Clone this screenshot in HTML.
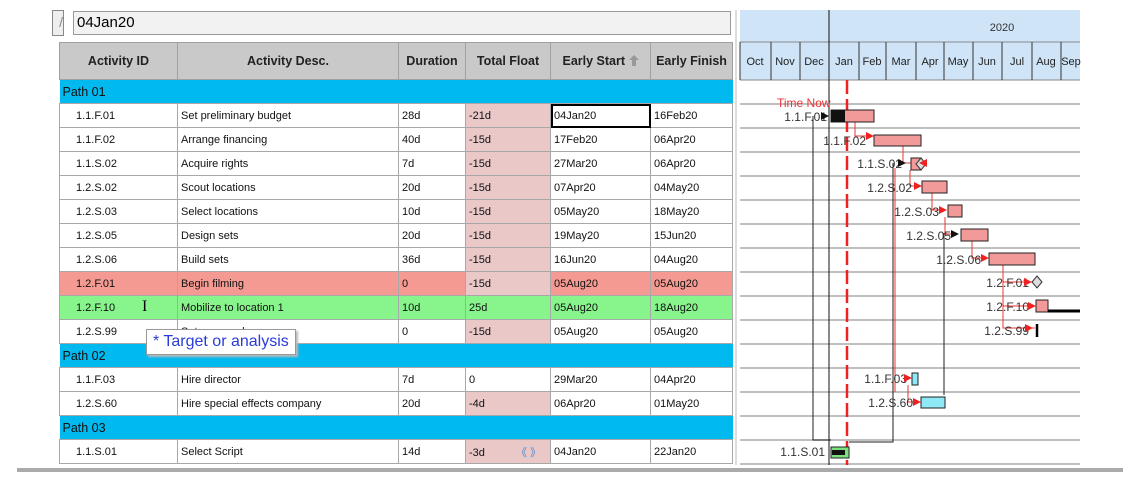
<!DOCTYPE html>
<html><head><meta charset="utf-8"><style>
body{margin:0;width:1147px;height:497px;background:#fff;position:relative;overflow:hidden;font-family:"Liberation Sans",sans-serif;}
.a{position:absolute;}
table{position:absolute;left:59px;top:42px;border-collapse:collapse;table-layout:fixed;font-size:11px;}
td{border:1px solid #a8a8a8;height:23px;padding:0 0 0 3px;white-space:nowrap;overflow:hidden;color:#111;}
th{background:#c9c9c9;border:1px solid #a0a0a0;height:36px;font-size:12.5px;font-weight:bold;color:#222;padding:0;white-space:nowrap;}
tr.p td{background:#00b9ef;font-size:12.5px;border-left:none;border-right:none;}
td.id{padding-left:16px;}
td.f{background:#eac8c8;}
tr.r td{background:#f59a92;} tr.r td.f{background:#eac8c8;}
tr.g td{background:#88f48c;}
</style></head><body>
<div class="a" style="left:52px;top:10px;width:10px;height:24px;border:1px solid #888;background:#eee;color:#888;font-size:14px;line-height:22px;text-align:right;overflow:hidden">/</div>
<div class="a" style="left:73px;top:11px;width:653px;height:22px;border:1px solid #999;background:#f2f2f2;font-size:15px;line-height:22px;padding-left:3px">04Jan20</div>
<table>
<colgroup><col style="width:118px"><col style="width:221px"><col style="width:67px"><col style="width:85px"><col style="width:100px"><col style="width:82px"></colgroup>
<tr><th>Activity ID</th><th>Activity Desc.</th><th>Duration</th><th>Total Float</th><th>Early Start <svg width="10" height="11" style="vertical-align:-1px"><path d="M5,0 L10,5 L7,5 L7,11 L3,11 L3,5 L0,5z" fill="#999"/></svg></th><th>Early Finish</th></tr>
<tr class="p"><td colspan="6">Path 01</td></tr>
<tr><td class="id">1.1.F.01</td><td>Set preliminary budget</td><td>28d</td><td class="f">-21d</td><td style="outline:2px solid #000;outline-offset:-2px">04Jan20</td><td>16Feb20</td></tr>
<tr><td class="id">1.1.F.02</td><td>Arrange financing</td><td>40d</td><td class="f">-15d</td><td>17Feb20</td><td>06Apr20</td></tr>
<tr><td class="id">1.1.S.02</td><td>Acquire rights</td><td>7d</td><td class="f">-15d</td><td>27Mar20</td><td>06Apr20</td></tr>
<tr><td class="id">1.2.S.02</td><td>Scout locations</td><td>20d</td><td class="f">-15d</td><td>07Apr20</td><td>04May20</td></tr>
<tr><td class="id">1.2.S.03</td><td>Select locations</td><td>10d</td><td class="f">-15d</td><td>05May20</td><td>18May20</td></tr>
<tr><td class="id">1.2.S.05</td><td>Design sets</td><td>20d</td><td class="f">-15d</td><td>19May20</td><td>15Jun20</td></tr>
<tr><td class="id">1.2.S.06</td><td>Build sets</td><td>36d</td><td class="f">-15d</td><td>16Jun20</td><td>04Aug20</td></tr>
<tr class="r"><td class="id">1.2.F.01</td><td>Begin filming</td><td>0</td><td class="f">-15d</td><td>05Aug20</td><td>05Aug20</td></tr>
<tr class="g"><td class="id">1.2.F.10</td><td>Mobilize to location 1</td><td>10d</td><td>25d</td><td>05Aug20</td><td>18Aug20</td></tr>
<tr><td class="id">1.2.S.99</td><td>Set prepared</td><td>0</td><td class="f">-15d</td><td>05Aug20</td><td>05Aug20</td></tr>
<tr class="p"><td colspan="6">Path 02</td></tr>
<tr><td class="id">1.1.F.03</td><td>Hire director</td><td>7d</td><td>0</td><td>29Mar20</td><td>04Apr20</td></tr>
<tr><td class="id">1.2.S.60</td><td>Hire special effects company</td><td>20d</td><td class="f">-4d</td><td>06Apr20</td><td>01May20</td></tr>
<tr class="p"><td colspan="6">Path 03</td></tr>
<tr><td class="id">1.1.S.01</td><td>Select Script</td><td>14d</td><td class="f">-3d <span style="color:#4a8ad0;margin-left:28px">《 》</span></td><td>04Jan20</td><td>22Jan20</td></tr>
</table>
<div class="a" style="left:142px;top:298px;font-size:16px;font-family:'Liberation Serif',serif">I</div>
<div class="a" style="left:146px;top:329px;padding:3px 6px;border:1px solid #999;background:#fff;color:#2a3cd8;font-size:16px;box-shadow:2px 2px 2px #bbb">* Target or analysis</div>
<div class="a" style="left:17px;top:468px;width:1106px;height:4px;background:#aaa"></div>
<svg class="a" style="left:735px;top:0" width="412" height="468" font-family="Liberation Sans,sans-serif">
<line x1="1" y1="10" x2="1" y2="465" stroke="#bbb"/>
<rect x="5" y="10" width="340" height="70" fill="#cfe4f7"/>
<text x="267" y="31" font-size="11" fill="#333" text-anchor="middle">2020</text>
<line x1="5" y1="42" x2="345" y2="42" stroke="#888"/>
<line x1="5" y1="80" x2="345" y2="80" stroke="#888"/>
<g stroke="#333"><line x1="5" y1="42" x2="5" y2="80"/><line x1="36" y1="42" x2="36" y2="80"/><line x1="65" y1="42" x2="65" y2="80"/><line x1="124" y1="42" x2="124" y2="80"/><line x1="151" y1="42" x2="151" y2="80"/><line x1="181" y1="42" x2="181" y2="80"/><line x1="209" y1="42" x2="209" y2="80"/><line x1="238" y1="42" x2="238" y2="80"/><line x1="267" y1="42" x2="267" y2="80"/><line x1="297" y1="42" x2="297" y2="80"/><line x1="326" y1="42" x2="326" y2="80"/></g>
<g font-size="11" fill="#222" text-anchor="middle"><text x="20" y="65">Oct</text><text x="50" y="65">Nov</text><text x="79" y="65">Dec</text><text x="109" y="65">Jan</text><text x="137" y="65">Feb</text><text x="166" y="65">Mar</text><text x="195" y="65">Apr</text><text x="223" y="65">May</text><text x="252" y="65">Jun</text><text x="282" y="65">Jul</text><text x="311" y="65">Aug</text><text x="336" y="65">Sep</text></g>
<g stroke="#aaa" stroke-width="1.5"><line x1="5" y1="104" x2="345" y2="104"/><line x1="5" y1="128" x2="345" y2="128"/><line x1="5" y1="152" x2="345" y2="152"/><line x1="5" y1="176" x2="345" y2="176"/><line x1="5" y1="200" x2="345" y2="200"/><line x1="5" y1="224" x2="345" y2="224"/><line x1="5" y1="248" x2="345" y2="248"/><line x1="5" y1="272" x2="345" y2="272"/><line x1="5" y1="296" x2="345" y2="296"/><line x1="5" y1="320" x2="345" y2="320"/><line x1="5" y1="344" x2="345" y2="344"/><line x1="5" y1="368" x2="345" y2="368"/><line x1="5" y1="392" x2="345" y2="392"/><line x1="5" y1="416" x2="345" y2="416"/><line x1="5" y1="440" x2="345" y2="440"/><line x1="5" y1="464" x2="345" y2="464"/></g>
<line x1="94" y1="10" x2="94" y2="465" stroke="#111"/>
<polyline points="78,116 78,440 96,440" fill="none" stroke="#222"/>
<polyline points="158,163 158,442 114,442" fill="none" stroke="#222"/>
<line x1="209" y1="233" x2="209" y2="395" stroke="#222"/>
<polyline points="160,168 160,392" fill="none" stroke="#e33"/>
<line x1="112" y1="80" x2="112" y2="465" stroke="#e22" stroke-width="2.5" stroke-dasharray="14,5"/>
<text x="42" y="107" font-size="12" fill="#e33">Time Now</text>
<g fill="none" stroke="#e33"><polyline points="120,122 120,136 135,136"/><polyline points="168,146 168,163 185,163"/><polyline points="175,170 175,186 183,186"/><polyline points="197,193 197,210 210,210"/><polyline points="210,217 210,234 222,234"/><polyline points="237,241 237,258 248,258"/><polyline points="268,265 268,328 300,328"/><line x1="268" y1="282" x2="298" y2="282"/><line x1="268" y1="306" x2="298" y2="306"/><polyline points="173,385 173,402 182,402"/></g>
<g fill="#f29a9a" stroke="#222"><rect x="96" y="110" width="43" height="12"/><rect x="139" y="135" width="47" height="11"/><rect x="176" y="158" width="10" height="12"/><rect x="187" y="181" width="25" height="12"/><rect x="213" y="205" width="14" height="12"/><rect x="226" y="229" width="27" height="12"/><rect x="254" y="253" width="46" height="12"/><rect x="301" y="300" width="12" height="12"/></g>
<rect x="96" y="110" width="14" height="12" fill="#111"/>
<g fill="#ddd" stroke="#333"><path d="M186,158 l5,6 -5,6 -5,-6z"/><path d="M302,276 l5,6 -5,6 -5,-6z"/></g>
<line x1="313" y1="311" x2="345" y2="311" stroke="#000" stroke-width="3"/>
<line x1="302" y1="324" x2="302" y2="337" stroke="#000" stroke-width="2.5"/>
<g fill="#8ee8f6" stroke="#222"><rect x="177" y="373" width="6" height="12"/><rect x="186" y="397" width="24" height="11"/></g>
<rect x="96" y="447" width="18" height="11" fill="#7de07f" stroke="#222"/><rect x="97" y="450" width="13" height="5" fill="#111"/>
<g font-size="12" fill="#333" text-anchor="end"><text x="92" y="121">1.1.F.01</text><text x="131" y="145">1.1.F.02</text><text x="167" y="168">1.1.S.02</text><text x="177" y="192">1.2.S.02</text><text x="204" y="216">1.2.S.03</text><text x="216" y="240">1.2.S.05</text><text x="246" y="264">1.2.S.06</text><text x="294" y="287">1.2.F.01</text><text x="294" y="311">1.2.F.10</text><text x="294" y="335">1.2.S.99</text><text x="172" y="383">1.1.F.03</text><text x="178" y="407">1.2.S.60</text><text x="90" y="456">1.1.S.01</text></g>
<g fill="#111"><path d="M86,112 l8,4 -8,4z"/><path d="M163,159 l8,4 -8,4z"/><path d="M216,230 l8,4 -8,4z"/></g>
<g fill="#e22"><path d="M131,132 l8,4 -8,4z"/><path d="M192,159 l-8,4 8,4z"/><path d="M179,182 l8,4 -8,4z"/><path d="M204,206 l8,4 -8,4z"/><path d="M246,254 l8,4 -8,4z"/><path d="M289,278 l8,4 -8,4z"/><path d="M293,302 l8,4 -8,4z"/><path d="M290,324 l8,4 -8,4z"/><path d="M169,374 l8,4 -8,4z"/><path d="M178,398 l8,4 -8,4z"/></g>
</svg>
</body></html>
